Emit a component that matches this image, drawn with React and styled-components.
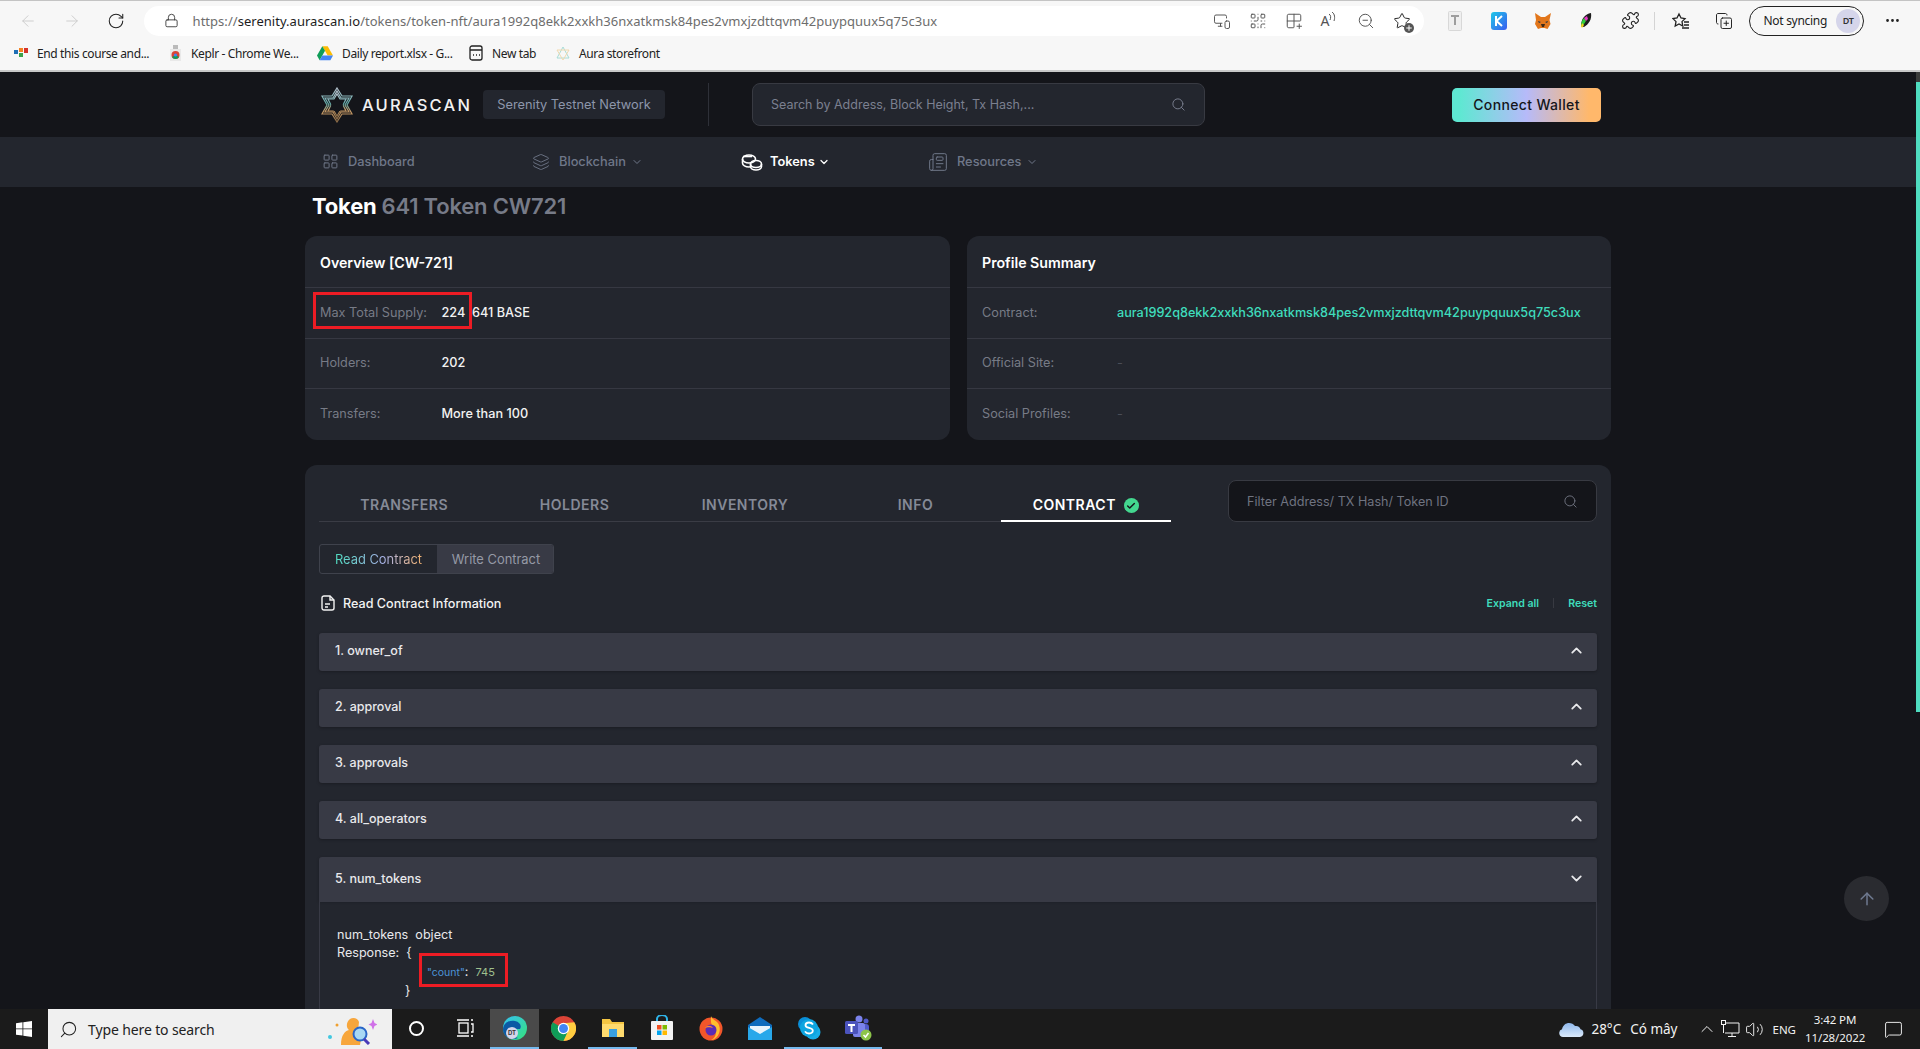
import React from 'react';
import styled, { createGlobalStyle } from 'styled-components';
import {
  ArrowLeft, ArrowRight, RotateCw, Lock, Search, ChevronDown, ChevronUp, LayoutGrid, Layers,
  Newspaper, ArrowUp, Check, Puzzle, Star, MonitorSmartphone, QrCode, Grid2x2Plus, ZoomOut,
  CopyPlus, Ellipsis, Volume2, MessageSquare, Plus,
} from 'lucide-react';

const GlobalStyle = createGlobalStyle`
  html, body { margin: 0; padding: 0; height: 100%; overflow: hidden; background: #14151a; }
  #root { height: 100%; }
  * { box-sizing: border-box; }
`;

const Screen = styled.div`
  height: 1049px;
  display: flex;
  flex-direction: column;
  font-family: Inter, "Liberation Sans", sans-serif;
`;

/* browser chrome */
const BrowserBar = styled.div`
  height: 40px;
  background: #f7f7f7;
  border-top: 1px solid #c4c4c4;
  padding-left: 6px;
  display: flex;
  align-items: center;
  font-family: "Noto Sans", "Liberation Sans", sans-serif;
  color: #222;
`;
const NavGlyph = styled.span`
  width: 44px;
  display: flex;
  justify-content: center;
  color: ${p => (p.$off ? '#c9c9c9' : '#222')};
`;
const UrlPill = styled.div`
  width: 1284px;
  height: 30px;
  margin-left: 6px;
  background: #fff;
  border-radius: 15px;
  display: flex;
  align-items: center;
  padding: 0 13px 0 20px;
`;
const UrlText = styled.div`
  margin-left: 14px;
  flex: 1;
  font-size: 13px;
  letter-spacing: 0.03px;
  color: #6d6d6d;
  white-space: nowrap;
  b { font-weight: 400; color: #1d1d1d; }
`;
const PillIcons = styled.div`
  display: flex;
  align-items: center;
  gap: 18px;
  color: #555;
`;
const ReadAloud = styled.span`
  width: 18px;
  display: flex;
  align-items: flex-start;
  font-size: 14px;
  line-height: 18px;
  color: #555;
`;
const FavAdd = styled.span`
  position: relative;
  display: flex;
`;
const FavBadge = styled.span`
  position: absolute;
  right: -3px;
  bottom: -3px;
  width: 10px;
  height: 10px;
  border-radius: 50%;
  background: #555;
  color: #fff;
  display: flex;
  align-items: center;
  justify-content: center;
`;
const ExtIcons = styled.div`
  display: flex;
  align-items: center;
  margin-left: 17px;
`;
const ExtSlot = styled.span`
  width: ${p => p.$w || 44}px;
  display: flex;
  justify-content: center;
  color: #222;
`;
const ExtDivider = styled.span`
  width: 1px;
  height: 18px;
  background: #d4d4d4;
  margin: 0 5px 0 7px;
`;
const SyncPill = styled.div`
  width: 116px;
  height: 30px;
  margin-left: 3px;
  border: 1px solid #222;
  border-radius: 15px;
  display: flex;
  align-items: center;
  justify-content: space-between;
  padding: 0 3px 0 14px;
  font-size: 12px;
  letter-spacing: -0.3px;
  white-space: nowrap;
`;
const Avatar = styled.span`
  width: 24px;
  height: 24px;
  border-radius: 50%;
  background: #d5d5ea;
  color: #333;
  font-size: 9px;
  font-weight: 600;
  display: flex;
  align-items: center;
  justify-content: center;
`;
const BookmarkBar = styled.div`
  height: 32px;
  background: #f7f7f7;
  border-bottom: 2px solid #c8c8c8;
  display: flex;
  align-items: center;
  padding: 0 0 4px 14px;
  font-family: "Noto Sans", "Liberation Sans", sans-serif;
  font-size: 12px;
  letter-spacing: -0.38px;
  color: #222;
`;
const Bookmark = styled.div`
  width: ${p => p.$w}px;
  display: flex;
  align-items: center;
  gap: 9px;
  white-space: nowrap;
`;

/* site header */
const SiteViewport = styled.div`
  flex: 1;
  min-height: 0;
  overflow: hidden;
  position: relative;
  background: #14151a;
`;
const Header = styled.header`
  height: 65px;
  display: flex;
  align-items: center;
  padding-left: 320px;
`;
const LogoWord = styled.div`
  margin-left: 8px;
  width: 121px;
  color: #f2f2f2;
  font-size: 16.5px;
  font-weight: 500;
  letter-spacing: 2.2px;
`;
const NetBadge = styled.div`
  width: 182px;
  height: 29px;
  background: #23262e;
  border-radius: 4px;
  color: #8d96ab;
  font-size: 12.8px;
  display: flex;
  align-items: center;
  justify-content: center;
`;
const HeadDivider = styled.div`
  width: 1px;
  height: 43px;
  background: #2e3038;
  margin: 0 43px;
`;
const HeadSearch = styled.div`
  width: 453px;
  height: 43px;
  background: #23262e;
  border: 1px solid #383a42;
  border-radius: 8px;
  padding: 0 18px;
  display: flex;
  align-items: center;
  justify-content: space-between;
  color: #7b8090;
  font-size: 12.5px;
`;
const ConnectBtn = styled.button`
  width: 149px;
  height: 34px;
  margin-left: 247px;
  border: 0;
  border-radius: 5px;
  background: linear-gradient(90deg, #5ee8d2 5%, #b6baf9 50%, #ffb86b 92%);
  color: #14151a;
  font-family: inherit;
  font-size: 14px;
  font-weight: 500;
  letter-spacing: 0.35px;
`;
const NavBar = styled.nav`
  height: 50px;
  background: #23262e;
  display: flex;
  align-items: center;
  padding: 0 0 1px 322px;
`;
const NavItem = styled.div`
  width: ${p => p.$w}px;
  display: flex;
  align-items: center;
  gap: ${p => p.$gap || 9}px;
  color: ${p => (p.$active ? '#fff' : '#6f7789')};
  font-size: 12.8px;
  font-weight: ${p => (p.$active ? 600 : 500)};
`;
const NavCaret = styled.span`
  display: flex;
  margin-left: -4px;
`;

/* page body */
const Main = styled.main`
  padding-left: 305px;
  width: 1611px;
  height: 872px;
  overflow: hidden;
`;
const PageTitle = styled.h1`
  margin: 0;
  height: 49px;
  padding: 4px 0 0 7px;
  font-size: 22px;
  line-height: 30px;
  font-weight: 700;
  letter-spacing: -0.2px;
  color: #fff;
  span { font-weight: 600; color: #777b88; }
`;
const Cards = styled.div`
  display: grid;
  grid-template-columns: 645px 644px;
  gap: 17px;
`;
const Card = styled.section`
  height: 204px;
  background: #23262e;
  border-radius: 12px;
  display: grid;
  grid-template-rows: 51px 51px 50px 52px;
`;
const CardHead = styled.div`
  padding: 2px 0 0 15px;
  display: flex;
  align-items: center;
  color: #fff;
  font-size: 14.2px;
  font-weight: 600;
`;
const Row = styled.div`
  position: relative;
  border-top: 1px solid #363842;
  padding: 0 0 2px 15px;
  display: flex;
  align-items: center;
  font-size: 12.7px;
`;
const Label = styled.span`
  width: ${p => p.$w}px;
  color: #777b86;
`;
const Value = styled.span`
  color: ${p => (p.$tone === 'link' ? '#3fdcbc' : p.$tone === 'none' ? '#4a4d57' : '#f2f2f2')};
  font-weight: ${p => (p.$tone === 'none' ? 400 : 500)};
  letter-spacing: ${p => (p.$tone === 'link' ? '-0.04px' : 'normal')};
`;
const SupplyMark = styled.div`
  position: absolute;
  left: 8px;
  top: 4px;
  width: 159px;
  height: 37px;
  border: 3px solid #ed1c24;
`;

const Panel = styled.section`
  margin-top: 25px;
  width: 1306px;
  height: 600px;
  background: #23262e;
  border-radius: 12px 12px 0 0;
  padding: 15px 14px 0;
`;
const PanelTop = styled.div`
  display: flex;
  justify-content: space-between;
  align-items: flex-end;
`;
const Tabs = styled.div`
  width: 852px;
  display: grid;
  grid-template-columns: repeat(5, 1fr);
  border-bottom: 1px solid #3a3c45;
`;
const Tab = styled.div`
  height: 31px;
  margin-bottom: -1px;
  display: flex;
  justify-content: center;
  gap: 8px;
  padding-top: 4px;
  font-size: 14px;
  font-weight: 600;
  line-height: 20px;
  letter-spacing: 0.5px;
  color: ${p => (p.$active ? '#fff' : '#858a97')};
  border-bottom: 2px solid ${p => (p.$active ? '#fff' : 'transparent')};
`;
const TabCheck = styled.span`
  width: 15px;
  height: 15px;
  margin-top: 3px;
  border-radius: 50%;
  background: #43d78f;
  color: #14151a;
  display: flex;
  align-items: center;
  justify-content: center;
`;
const Filter = styled.div`
  width: 369px;
  height: 42px;
  background: #14151a;
  border: 1px solid #383a42;
  border-radius: 8px;
  padding: 0 18px;
  display: flex;
  align-items: center;
  justify-content: space-between;
  color: #6f7380;
  font-size: 12.6px;
`;
const SubTabs = styled.div`
  margin-top: 22px;
  width: 235px;
  height: 30px;
  display: grid;
  grid-template-columns: 117px 118px;
  border: 1px solid #3f424c;
  border-radius: 3px;
  overflow: hidden;
  font-size: 12.9px;
`;
const ReadTab = styled.div`
  display: flex;
  align-items: center;
  justify-content: center;
  span {
    background: linear-gradient(90deg, #4fdcc0, #a7b2e8 55%, #f0b070);
    -webkit-background-clip: text;
    background-clip: text;
    color: transparent;
  }
`;
const WriteTab = styled.div`
  display: flex;
  align-items: center;
  justify-content: center;
  background: #383a45;
  color: #9599a5;
`;
const InfoRow = styled.div`
  margin-top: 18px;
  height: 22px;
  display: flex;
  align-items: center;
  color: #f2f2f2;
  font-size: 12.6px;
  font-weight: 500;
  padding-left: 2px;
`;
const InfoText = styled.span`
  margin-left: 8px;
  flex: 1;
`;
const InfoLink = styled.span`
  color: #3fdcbc;
  font-size: 10.6px;
  font-weight: 600;
`;
const InfoSep = styled.span`
  width: 1px;
  height: 10px;
  background: #383a42;
  margin: 0 14px;
`;
const Accordions = styled.div`
  margin-top: 19px;
  display: flex;
  flex-direction: column;
  gap: 18px;
`;
const AccordionHead = styled.div`
  height: ${p => (p.$open ? 44 : 38)}px;
  background: #383a45;
  border-radius: ${p => (p.$open ? '3px 3px 0 0' : '3px')};
  box-shadow: 0 1px 3px rgba(0, 0, 0, 0.25);
  padding: 0 12px ${p => (p.$open ? 1 : 3)}px 16px;
  display: flex;
  align-items: center;
  justify-content: space-between;
  color: #e9e9ec;
  font-size: 12.5px;
  font-weight: 500;
`;
const AccordionBody = styled.div`
  margin-top: -18px;
  position: relative;
  height: 120px;
  padding: 24px 17px;
  border: 1px solid #383a45;
  color: #e9e9ec;
  font-size: 12.6px;
  line-height: 18.4px;
`;
const JsonLine = styled.div`
  white-space: pre;
  padding-left: ${p => p.$indent || 0}px;
`;
const JsonKey = styled.span`
  color: #4d94d8;
  font-size: 10.5px;
`;
const JsonNum = styled.span`
  color: #9fc08e;
  font-size: 11px;
`;
const CountMark = styled.div`
  position: absolute;
  left: 99px;
  top: 51px;
  width: 89px;
  height: 34px;
  border: 3px solid #ed1c24;
`;
const ScrollThumb = styled.div`
  position: absolute;
  right: 0;
  top: 0;
  width: 4px;
  height: 640px;
  background: linear-gradient(#3a3b3a 10px, #4fdcc0 10px);
`;
const ToTop = styled.div`
  position: absolute;
  left: 1844px;
  top: 804px;
  width: 45px;
  height: 45px;
  border-radius: 50%;
  background: #2a2b30;
  color: #6f7a90;
  display: flex;
  align-items: center;
  justify-content: center;
`;

/* windows taskbar */
const Taskbar = styled.footer`
  height: 40px;
  background: #1b1b1b;
  display: flex;
  align-items: stretch;
  font-family: "Noto Sans", "Liberation Sans", sans-serif;
  color: #f2f2f2;
`;
const StartBtn = styled.div`
  width: 48px;
  display: flex;
  align-items: center;
  justify-content: center;
`;
const TaskSearch = styled.div`
  width: 344px;
  background: #f0f0f0;
  color: #222;
  font-size: 14px;
  letter-spacing: -0.12px;
  display: flex;
  align-items: center;
  gap: 10px;
  padding-left: 11px;
  white-space: nowrap;
`;
const FlippedGlass = styled.span`
  display: flex;
  transform: scaleX(-1);
`;
const TaskSearchArt = styled.span`
  margin-left: auto;
  margin-right: 15px;
  display: flex;
`;
const TaskSlot = styled.div`
  width: ${p => p.$w || 49}px;
  display: flex;
  align-items: center;
  justify-content: center;
  background: ${p => (p.$active ? '#4a4a4a' : 'transparent')};
  border-bottom: 2px solid ${p => (p.$open ? '#76b9ed' : 'transparent')};
`;
const Cortana = styled.span`
  width: 15px;
  height: 15px;
  border: 2px solid #fff;
  border-radius: 50%;
`;
const Tray = styled.div`
  margin-left: auto;
  display: flex;
  align-items: center;
  font-size: 13px;
  white-space: nowrap;
  padding-right: 17px;
`;
const TrayText = styled.span`
  margin-left: ${p => p.$ml || 0}px;
  font-size: ${p => p.$size || 13}px;
`;
const TrayIcon = styled.span`
  display: flex;
  margin-left: ${p => p.$ml || 0}px;
`;
const Clock = styled.div`
  margin-left: 9px;
  width: 60px;
  text-align: center;
  font-size: 11.5px;
  letter-spacing: -0.1px;
  line-height: 18px;
`;

const AuraLogo = () => (
  <svg width="34" height="36" viewBox="0 0 34 36" fill="none">
    <defs>
      <linearGradient id="auraG" x1="0" y1="0" x2="0" y2="1">
        <stop offset="0" stopColor="#b8c4d0" />
        <stop offset="0.45" stopColor="#5fa7a5" />
        <stop offset="0.7" stopColor="#c79a66" />
        <stop offset="1" stopColor="#8a6a45" />
      </linearGradient>
    </defs>
    <path d="M17 1 L22 9 L32 9 L27 18 L32 27 L22 27 L17 35 L12 27 L2 27 L7 18 L2 9 L12 9 Z" stroke="url(#auraG)" strokeWidth="1.2" />
    <path d="M17 4 L21 11 L29 11 L25 18 L29 25 L21 25 L17 32 L13 25 L5 25 L9 18 L5 11 L13 11 Z" stroke="url(#auraG)" strokeWidth="1.2" />
    <path d="M17 7 L20 12 L26 12 L23 18 L26 24 L20 24 L17 29 L14 24 L8 24 L11 18 L8 12 L14 12 Z" stroke="url(#auraG)" strokeWidth="1.2" />
    <path d="M17 11 L23 18 L20 24 L14 24 L11 18 Z" fill="#14151a" />
  </svg>
);

const AloudArcs = () => (
  <svg width="7" height="12" viewBox="0 0 7 12" fill="none" stroke="#555" strokeWidth="1">
    <path d="M0 2c2 1 2 4 1 6M3 0c3 2 3 6 2 9" />
  </svg>
);

const CoinsIcon = () => (
  <svg width="22" height="18" viewBox="0 0 22 18" fill="none" stroke="#fff" strokeWidth="1.6">
    <ellipse cx="8" cy="6" rx="6.5" ry="4" />
    <path d="M1.5 6v4c0 2.2 3 4 6.5 4 1 0 2-.1 3-.4" />
    <ellipse cx="15" cy="11" rx="5.5" ry="3.5" />
    <path d="M9.5 11v2.5c0 2 2.5 3.5 5.5 3.5s5.5-1.500 5.500-3.500V11" />
    <path d="M2 3.500h9" />
  </svg>
);

const DocIcon = () => (
  <svg width="14" height="16" viewBox="0 0 14 16" fill="none" stroke="#f2f2f2" strokeWidth="1.4">
    <path d="M3 1h6l4 4v8a2 2 0 0 1-2 2H3a2 2 0 0 1-2-2V3a2 2 0 0 1 2-2z" />
    <path d="M9 1v4h4M4 9h5M4 12h3" />
  </svg>
);

const ChromeIcon = ({ size = 16 }) => (
  <svg width={size} height={size} viewBox="0 0 24 24">
    <circle cx="12" cy="12" r="12" fill="#db4437" />
    <path d="M12 12 L1.600 6 A12 12 0 0 0 12 24 L18 13.500 Z" fill="#0f9d58" />
    <path d="M12 7 L22.400 6 A12 12 0 0 1 12 24 L17 13 Z" fill="#ffcd40" />
    <circle cx="12" cy="12" r="5.500" fill="#fff" />
    <circle cx="12" cy="12" r="4.300" fill="#4285f4" />
  </svg>
);

const DriveIcon = () => (
  <svg width="16" height="15" viewBox="0 0 24 22">
    <path d="M8 0h8l8 14h-8z" fill="#fbbc04" />
    <path d="M8 0 0 14l4 7 8-14z" fill="#0f9d58" />
    <path d="M4 21h16l4-7H8z" fill="#4285f4" />
  </svg>
);

const FptIcon = () => (
  <svg width="14" height="12" viewBox="0 0 14 12">
    <rect x="0" y="3" width="4" height="4" fill="#1f6fb5" />
    <rect x="5" y="1" width="4" height="4" fill="#f58220" />
    <rect x="5" y="6" width="4" height="4" fill="#3aa14a" />
    <rect x="10" y="1" width="4" height="5" fill="#d6332a" />
  </svg>
);

const KeplrBm = () => (
  <svg width="13" height="16" viewBox="0 0 13 16">
    <path d="M4 0h5v4H4z" fill="#bbb" />
    <path d="M1 4h11v12H1z" fill="#e9e9e9" />
    <circle cx="6.500" cy="10" r="4" fill="#db4437" />
    <path d="M6.500 10 3 12a4 4 0 0 0 7 0z" fill="#0f9d58" />
    <circle cx="6.500" cy="10" r="1.600" fill="#4285f4" />
  </svg>
);

const NewTabBm = () => (
  <svg width="14" height="16" viewBox="0 0 14 16" fill="none" stroke="#222" strokeWidth="1.300">
    <rect x="1" y="1" width="12" height="14" rx="2" />
    <path d="M1 5h12M4 10h1M7 10h1M10 10h1" />
  </svg>
);

const AuraBm = () => (
  <svg width="14" height="15" viewBox="0 0 14 15" fill="none" strokeWidth="1">
    <path d="M7 1 L13 12 H1 Z" stroke="#a8dcd6" />
    <path d="M7 14 L1 4 H13 Z" stroke="#f0d9b0" />
  </svg>
);

const KExt = () => (
  <svg width="16" height="18" viewBox="0 0 16 18">
    <defs>
      <linearGradient id="kG" x1="0" y1="0" x2="1" y2="1">
        <stop offset="0" stopColor="#1ec8e8" />
        <stop offset="1" stopColor="#3a5cf0" />
      </linearGradient>
    </defs>
    <rect width="16" height="18" rx="3" fill="url(#kG)" />
    <path d="M5 4v10M11 4 5.500 9 11 14" stroke="#fff" strokeWidth="2" fill="none" />
  </svg>
);

const FoxExt = () => (
  <svg width="18" height="18" viewBox="0 0 18 18">
    <path d="M1 1l6 4h4l6-4-1.500 7 1 4-3 5-3-1H7l-3 1-3-5 1-4z" fill="#e2761b" />
    <path d="M7 12h4l-1 3H8z" fill="#3d2a1a" />
    <path d="M4 9l3 1-2 1zM14 9l-3 1 2 1z" fill="#233447" />
  </svg>
);

const FeatherExt = () => (
  <svg width="14" height="18" viewBox="0 0 14 18">
    <path d="M12 1C6 2 2 7 2 14l3 1C10 12 13 7 12 1z" fill="#1d1d1d" />
    <path d="M2 14c0-3 1-6 3-8l2 3-4 6z" fill="#2fd03a" />
    <path d="M5 6l3-2 1 3-2 2z" fill="#e93cc8" />
    <path d="M2 14l1-3 2 2-2 3z" fill="#f2d21d" />
  </svg>
);

const TExt = () => (
  <svg width="14" height="20" viewBox="0 0 14 20">
    <rect x=".5" y=".5" width="13" height="19" rx="1" fill="#efefef" stroke="#d8d8d8" />
    <path d="M3 4h8v2H8v8H6V6H3z" fill="#9d9d9d" />
  </svg>
);

const FavList = () => (
  <svg width="18" height="18" viewBox="0 0 18 18" fill="none" stroke="#222" strokeWidth="1.300">
    <path d="M7 2l2 4 4 .6-3 3 .8 4.400L7 12l-3.800 2L4 9.600l-3-3L5 6z" />
    <path d="M12 10h5M12 13h5M10 16h7" />
  </svg>
);

const WinLogo = () => (
  <svg width="16" height="16" viewBox="0 0 16 16" fill="#fff">
    <path d="M0 2.200 6.500 1.300v6.200H0zM7.300 1.200 16 0v7.500H7.300zM0 8.300h6.500v6.300L0 13.700zM7.300 8.300H16V16l-8.700-1.200z" />
  </svg>
);

const SearchArt = () => (
  <svg width="50" height="32" viewBox="0 0 50 32">
    <circle cx="3" cy="24" r="2" fill="#42c8e0" />
    <circle cx="10" cy="12" r="1.500" fill="#f0a030" />
    <path d="M46 6l1.500 4 3 1.500-3 1.500-1.500 4-1.500-4-3-1.500 3-1.500z" fill="#d070e8" />
    <path d="M14 32c0-10 4-14 8-15-3-2-3-8 1-11 3-2 8-1 9 3l-1 9 4 3-2 11z" fill="#f7a63c" />
    <circle cx="33" cy="21" r="6.500" fill="#a8d8f4" stroke="#2a66c8" strokeWidth="2" />
    <path d="M37 26l5 5" stroke="#4a3ab8" strokeWidth="3" />
  </svg>
);

const TaskViewIcon = () => (
  <svg width="18" height="18" viewBox="0 0 18 18" fill="none" stroke="#fff" strokeWidth="1.300">
    <rect x="3" y="4" width="9" height="10" />
    <path d="M1 1h12M1 17h12M15 1h2M15 17h2M15 5h2v8h-2" />
  </svg>
);

const EdgeIcon = () => (
  <svg width="26" height="26" viewBox="0 0 26 26">
    <defs>
      <linearGradient id="edgeG" x1="0" y1="0" x2="1" y2="1">
        <stop offset="0" stopColor="#35c1f1" />
        <stop offset="1" stopColor="#36e27c" />
      </linearGradient>
    </defs>
    <circle cx="13" cy="13" r="12" fill="url(#edgeG)" />
    <path d="M1 14C2 7 8 5 13 6c5 1 7 5 5 8h-7c-2 4 0 8 5 9-8 3-15-2-15-9z" fill="#0c59a4" />
    <circle cx="10" cy="18" r="6" fill="#d5d5ea" />
    <text x="10" y="20" fontSize="6" fontWeight="700" textAnchor="middle" fill="#333" fontFamily="Inter, sans-serif">DT</text>
  </svg>
);

const FolderIcon = () => (
  <svg width="24" height="24" viewBox="0 0 24 24">
    <path d="M1 3h8l2 3h12v15H1z" fill="#f4c542" />
    <path d="M1 8h22v13H1z" fill="#ffdb6e" />
    <path d="M8 13h8v8H8z" fill="#3aa0e0" />
  </svg>
);

const StoreIcon = () => (
  <svg width="24" height="26" viewBox="0 0 24 26">
    <path d="M7 6V4a5 4 0 0 1 10 0v2" fill="none" stroke="#2fb4e8" strokeWidth="2" />
    <rect x="1" y="6" width="22" height="19" rx="1" fill="#f3f3f3" />
    <rect x="7" y="10" width="4.500" height="4.500" fill="#f25022" />
    <rect x="12.500" y="10" width="4.500" height="4.500" fill="#7fba00" />
    <rect x="7" y="15.500" width="4.500" height="4.500" fill="#00a4ef" />
    <rect x="12.500" y="15.500" width="4.500" height="4.500" fill="#ffb900" />
  </svg>
);

const FirefoxIcon = () => (
  <svg width="24" height="26" viewBox="0 0 24 26">
    <circle cx="12" cy="14" r="11.500" fill="#f2562a" />
    <path d="M12 1c1 4 6 4 8 9 3 8-3 15-8 15 4-2 6-6 4-10-1-2-5-4-4-14z" fill="#ffbd2e" />
    <circle cx="12" cy="15" r="5.500" fill="#5b2bb5" />
    <path d="M6 13c2-3 6-3 8 0-2-1-6-1-8 0z" fill="#ff8a2e" />
  </svg>
);

const MailIcon = () => (
  <svg width="26" height="24" viewBox="0 0 26 24">
    <path d="M1 9 13 1l12 8v15H1z" fill="#0f6cbd" />
    <path d="M3 10h20v6l-10 5-10-5z" fill="#e8f4fc" />
    <path d="M1 11l12 7 12-7v13H1z" fill="#28a8ea" />
  </svg>
);

const SkypeIcon = () => (
  <svg width="24" height="24" viewBox="0 0 24 24">
    <circle cx="8" cy="8" r="7" fill="#0a8fd8" />
    <circle cx="16" cy="16" r="7.500" fill="#18aee8" />
    <circle cx="12" cy="12" r="9" fill="#0ea5e0" />
    <path d="M16 8.500C15 7 13.500 6.500 12 6.500c-2 0-3.500 1-3.500 2.700 0 3.500 7.300 2 7.300 5.400 0 1.700-1.700 2.900-3.800 2.900-1.700 0-3.200-.7-4-2.100" fill="none" stroke="#fff" strokeWidth="1.800" />
  </svg>
);

const TeamsIcon = () => (
  <svg width="28" height="26" viewBox="0 0 28 26">
    <circle cx="15" cy="4" r="3.500" fill="#7b83eb" />
    <circle cx="22" cy="6" r="2.500" fill="#5059c9" />
    <rect x="15" y="9" width="10" height="11" rx="3" fill="#5059c9" />
    <rect x="9" y="8" width="12" height="14" rx="2" fill="#7b83eb" />
    <rect x="1" y="6" width="13" height="13" rx="1.500" fill="#4b53bc" />
    <path d="M4 9h7v2H8.500v6h-2v-6H4z" fill="#fff" />
    <circle cx="22" cy="20" r="5.500" fill="#8cc44a" />
    <path d="m19.500 20 2 2 3-4" stroke="#fff" strokeWidth="1.500" fill="none" />
  </svg>
);

const CloudIcon = () => (
  <svg width="25" height="16" viewBox="0 0 25 16">
    <defs>
      <linearGradient id="cloudG" x1="0" y1="0" x2="0" y2="1">
        <stop offset="0" stopColor="#8fb8ec" />
        <stop offset="1" stopColor="#dbe9fa" />
      </linearGradient>
    </defs>
    <path d="M4 16a4 4 0 0 1-1-7.800C4 4 7 2 10 2c2.500 0 4.500 1 6 3 3-.5 5 1 5.500 3.200A4 4 0 0 1 21 16z" fill="url(#cloudG)" />
  </svg>
);

const NetworkIcon = () => (
  <svg width="19" height="18" viewBox="0 0 19 18" fill="none" stroke="#f2f2f2" strokeWidth="1">
    <path d="M4 3h14v10H4M11 13v3M7 16.500h8" />
    <rect x=".5" y=".5" width="4" height="4" fill="#1b1b1b" />
    <path d="M2.500 4.500V13" />
  </svg>
);

const ACCORDIONS = ['1. owner_of', '2. approval', '3. approvals', '4. all_operators'];

const App = () => {
  return (
    <Screen>
      <GlobalStyle />

      <BrowserBar>
        <NavGlyph $off><ArrowLeft size={18} strokeWidth={1.2} /></NavGlyph>
        <NavGlyph $off><ArrowRight size={18} strokeWidth={1.2} /></NavGlyph>
        <NavGlyph><RotateCw size={18} strokeWidth={1.4} /></NavGlyph>
        <UrlPill>
          <Lock size={15} strokeWidth={1.4} color="#333" />
          <UrlText>https://<b>serenity.aurascan.io</b>/tokens/token-nft/aura1992q8ekk2xxkh36nxatkmsk84pes2vmxjzdttqvm42puypquux5q75c3ux</UrlText>
          <PillIcons>
            <MonitorSmartphone size={18} strokeWidth={1.3} />
            <QrCode size={18} strokeWidth={1.3} />
            <Grid2x2Plus size={18} strokeWidth={1.3} />
            <ReadAloud>A<AloudArcs /></ReadAloud>
            <ZoomOut size={18} strokeWidth={1.3} />
            <FavAdd>
              <Star size={18} strokeWidth={1.3} color="#222" />
              <FavBadge><Plus size={8} strokeWidth={3} /></FavBadge>
            </FavAdd>
          </PillIcons>
        </UrlPill>
        <ExtIcons>
          <ExtSlot $w={28}><TExt /></ExtSlot>
          <ExtSlot $w={60}><KExt /></ExtSlot>
          <ExtSlot $w={28}><FoxExt /></ExtSlot>
          <ExtSlot $w={58}><FeatherExt /></ExtSlot>
          <ExtSlot $w={32}><Puzzle size={19} strokeWidth={1.4} /></ExtSlot>
          <ExtDivider />
          <ExtSlot $w={42}><FavList /></ExtSlot>
          <ExtSlot $w={44}><CopyPlus size={18} strokeWidth={1.3} /></ExtSlot>
        </ExtIcons>
        <SyncPill>Not syncing<Avatar>DT</Avatar></SyncPill>
        <ExtSlot $w={56}><Ellipsis size={17} strokeWidth={2} /></ExtSlot>
      </BrowserBar>

      <BookmarkBar>
        <Bookmark $w={155}><FptIcon />End this course and...</Bookmark>
        <Bookmark $w={148}><KeplrBm />Keplr - Chrome We...</Bookmark>
        <Bookmark $w={152}><DriveIcon />Daily report.xlsx - G...</Bookmark>
        <Bookmark $w={87}><NewTabBm />New tab</Bookmark>
        <Bookmark $w={120}><AuraBm />Aura storefront</Bookmark>
      </BookmarkBar>

      <SiteViewport>
        <Header>
          <AuraLogo />
          <LogoWord>AURASCAN</LogoWord>
          <NetBadge>Serenity Testnet Network</NetBadge>
          <HeadDivider />
          <HeadSearch>
            Search by Address, Block Height, Tx Hash,...
            <Search size={15} strokeWidth={1.5} />
          </HeadSearch>
          <ConnectBtn>Connect Wallet</ConnectBtn>
        </Header>
        <NavBar>
          <NavItem $w={210}><LayoutGrid size={17} strokeWidth={1.4} />Dashboard</NavItem>
          <NavItem $w={209}><Layers size={18} strokeWidth={1.2} />Blockchain<NavCaret><ChevronDown size={12} /></NavCaret></NavItem>
          <NavItem $w={187} $active $gap={7}><CoinsIcon />Tokens<NavCaret><ChevronDown size={12} strokeWidth={2.5} /></NavCaret></NavItem>
          <NavItem $w={160}><Newspaper size={20} strokeWidth={1.2} />Resources<NavCaret><ChevronDown size={12} /></NavCaret></NavItem>
        </NavBar>

        <Main>
          <PageTitle>Token <span>641 Token CW721</span></PageTitle>
          <Cards>
            <Card>
              <CardHead>Overview [CW-721]</CardHead>
              <Row>
                <Label $w={121.5}>Max Total Supply:</Label>
                <Value>224 &nbsp;641 BASE</Value>
                <SupplyMark />
              </Row>
              <Row><Label $w={121.5}>Holders:</Label><Value>202</Value></Row>
              <Row><Label $w={121.5}>Transfers:</Label><Value>More than 100</Value></Row>
            </Card>
            <Card>
              <CardHead>Profile Summary</CardHead>
              <Row>
                <Label $w={135}>Contract:</Label>
                <Value $tone="link">aura1992q8ekk2xxkh36nxatkmsk84pes2vmxjzdttqvm42puypquux5q75c3ux</Value>
              </Row>
              <Row><Label $w={135}>Official Site:</Label><Value $tone="none">-</Value></Row>
              <Row><Label $w={135}>Social Profiles:</Label><Value $tone="none">-</Value></Row>
            </Card>
          </Cards>

          <Panel>
            <PanelTop>
              <Tabs>
                <Tab>TRANSFERS</Tab>
                <Tab>HOLDERS</Tab>
                <Tab>INVENTORY</Tab>
                <Tab>INFO</Tab>
                <Tab $active>
                  CONTRACT
                  <TabCheck><Check size={10} strokeWidth={3.5} /></TabCheck>
                </Tab>
              </Tabs>
              <Filter>
                Filter Address/ TX Hash/ Token ID
                <Search size={15} strokeWidth={1.5} />
              </Filter>
            </PanelTop>

            <SubTabs>
              <ReadTab><span>Read Contract</span></ReadTab>
              <WriteTab>Write Contract</WriteTab>
            </SubTabs>

            <InfoRow>
              <DocIcon />
              <InfoText>Read Contract Information</InfoText>
              <InfoLink>Expand all</InfoLink>
              <InfoSep />
              <InfoLink>Reset</InfoLink>
            </InfoRow>

            <Accordions>
              {ACCORDIONS.map(name => (
                <AccordionHead key={name}>
                  {name}
                  <ChevronUp size={17} strokeWidth={2.5} />
                </AccordionHead>
              ))}
              <AccordionHead $open>
                5. num_tokens
                <ChevronDown size={17} strokeWidth={2.5} />
              </AccordionHead>
              <AccordionBody>
                <JsonLine>num_tokens  object</JsonLine>
                <JsonLine>Response:  {'{'}</JsonLine>
                <JsonLine $indent={90}><JsonKey>"count"</JsonKey>:  <JsonNum>745</JsonNum></JsonLine>
                <JsonLine $indent={68}>{'}'}</JsonLine>
                <CountMark />
              </AccordionBody>
            </Accordions>
          </Panel>
        </Main>

        <ScrollThumb />
        <ToTop><ArrowUp size={20} strokeWidth={1.8} /></ToTop>
      </SiteViewport>

      <Taskbar>
        <StartBtn><WinLogo /></StartBtn>
        <TaskSearch>
          <FlippedGlass><Search size={19} strokeWidth={1.3} /></FlippedGlass>
          Type here to search
          <TaskSearchArt><SearchArt /></TaskSearchArt>
        </TaskSearch>
        <TaskSlot $w={48}><Cortana /></TaskSlot>
        <TaskSlot $w={50}><TaskViewIcon /></TaskSlot>
        <TaskSlot $active $open $w={49}><EdgeIcon /></TaskSlot>
        <TaskSlot><ChromeIcon size={25} /></TaskSlot>
        <TaskSlot $open><FolderIcon /></TaskSlot>
        <TaskSlot><StoreIcon /></TaskSlot>
        <TaskSlot><FirefoxIcon /></TaskSlot>
        <TaskSlot><MailIcon /></TaskSlot>
        <TaskSlot $open><SkypeIcon /></TaskSlot>
        <TaskSlot $open><TeamsIcon /></TaskSlot>
        <Tray>
          <CloudIcon />
          <TrayText $ml={7} $size={13.5}>28°C</TrayText>
          <TrayText $ml={9} $size={13.5}>Có mây</TrayText>
          <TrayIcon $ml={20}><ChevronUp size={20} strokeWidth={1.2} /></TrayIcon>
          <TrayIcon $ml={4}><NetworkIcon /></TrayIcon>
          <TrayIcon $ml={5}><Volume2 size={19} strokeWidth={1.2} /></TrayIcon>
          <TrayText $ml={8} $size={11.5}>ENG</TrayText>
          <Clock>3:42 PM<br />11/28/2022</Clock>
          <TrayIcon $ml={19}><MessageSquare size={19} strokeWidth={1.2} /></TrayIcon>
        </Tray>
      </Taskbar>
    </Screen>
  );
};

export default App;
